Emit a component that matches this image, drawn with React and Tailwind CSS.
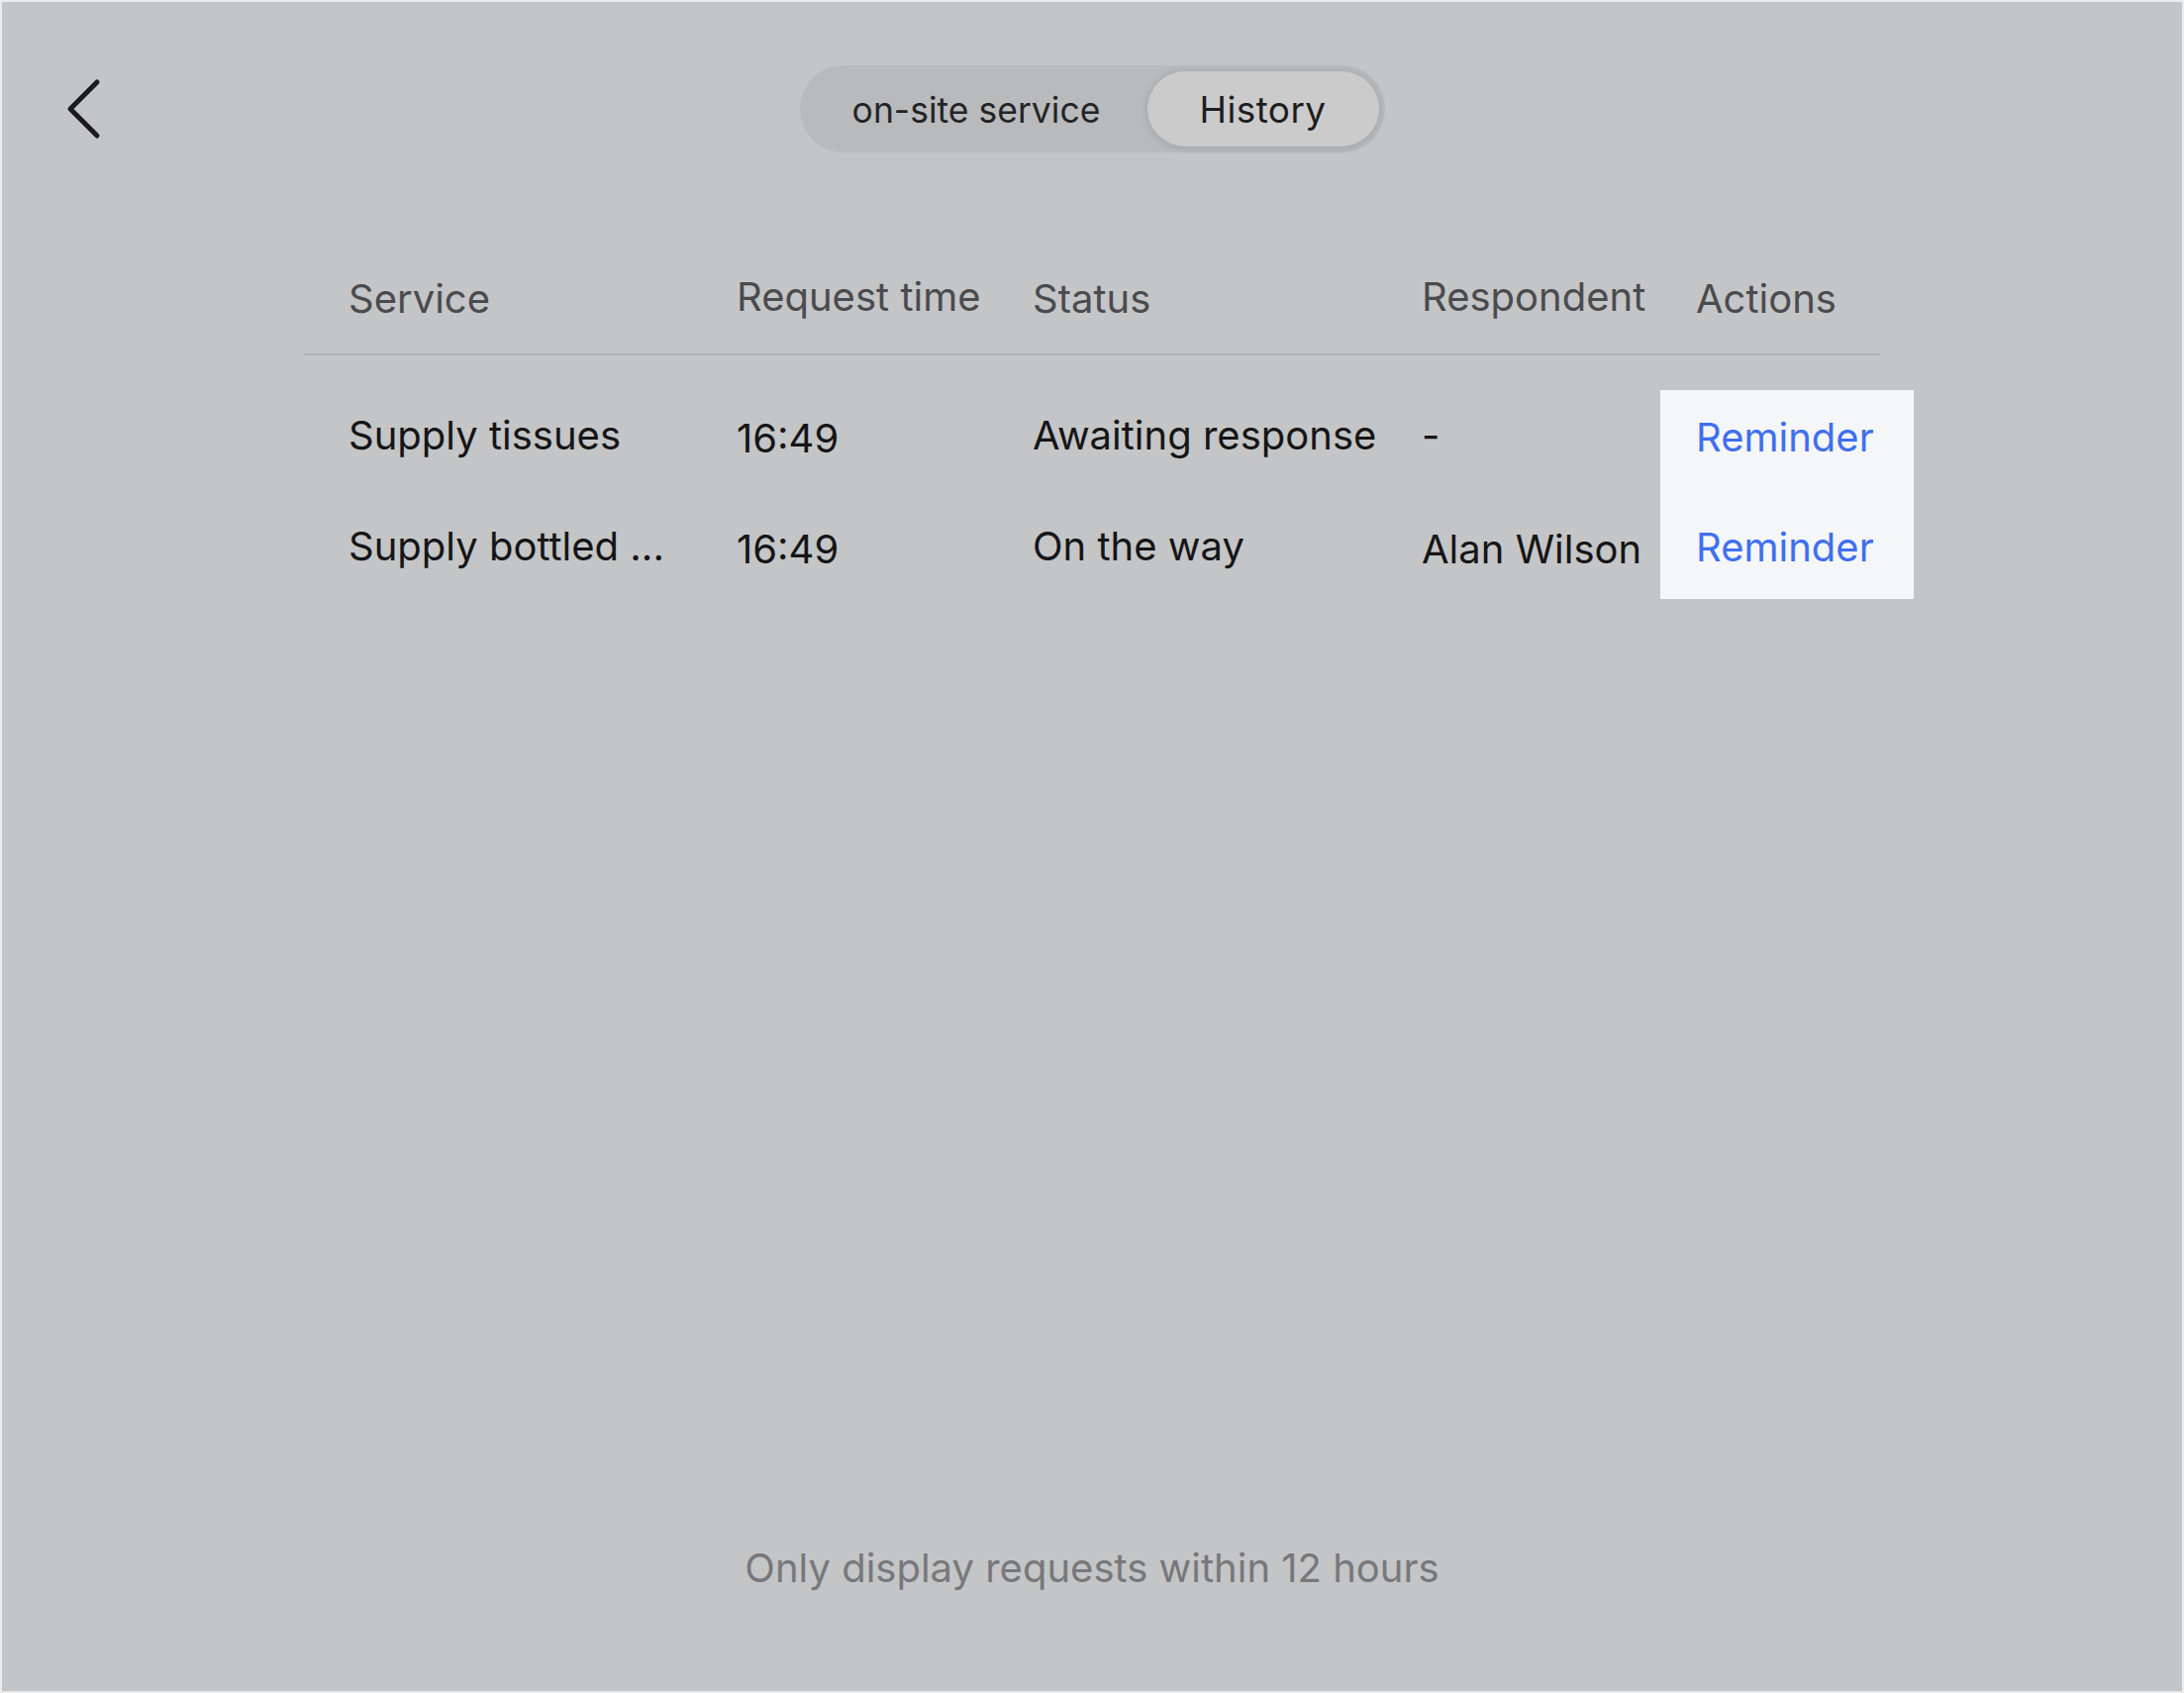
import React from "react";

const font = { fontFamily: 'Inter, "Noto Sans", sans-serif' };

export default function App() {
  return (
    <div
      className="w-[2206px] h-[1710px] bg-[#c4c5c6] border-2 border-[#ececec] flex flex-col"
      style={font}
    >
      {/* Top bar */}
      <div className="grid grid-cols-[1fr_auto_1fr] items-center pt-[64px]">
        <div className="pl-[65px]">
          <svg width="36" height="62" viewBox="0 0 36 62" fill="none">
            <path
              d="M31 4 L4 31 L31 58"
              stroke="#1b1b1d"
              strokeWidth="5"
              strokeLinecap="round"
              strokeLinejoin="round"
            />
          </svg>
        </div>
        <div className="flex items-center h-[88px] p-[6px] rounded-full bg-[#b9babc]">
          <div className="w-[345px] h-full flex items-center justify-center pt-[3px] text-[35.5px] text-[#242427]">
            on-site service
          </div>
          <div className="w-[234px] h-full flex items-center justify-center pt-[2px] rounded-full bg-[#cbcbcc] shadow-[0_1px_8px_rgba(0,0,0,0.14)] text-[37px] text-[#1d1d1f] tracking-[0.4px]">
            History
          </div>
        </div>
        <div />
      </div>

      {/* Table */}
      <div className="w-[1592px] mx-auto mt-[93px]">
        <div className="grid grid-cols-[392px_299px_393px_277px_1fr] items-center h-[112px] pl-[45px] border-b-2 border-[#b3b4b6] text-[40px] text-[#4a4b4f]">
          <div>Service</div>
          <div className="pb-[5px]">Request time</div>
          <div>Status</div>
          <div className="pb-[5px]">Respondent</div>
          <div>Actions</div>
        </div>

        <div className="flex mt-[35px] pl-[45px] text-[40px] text-[#151517]">
          <div className="grid grid-cols-[392px_299px_393px_241px] auto-rows-[112px]">
            <div className="pt-[22px] leading-[48px]">Supply tissues</div>
            <div className="pt-[25px] leading-[48px]">16:49</div>
            <div className="pt-[22px] leading-[48px]">Awaiting response</div>
            <div className="pt-[22px] leading-[48px]">-</div>

            <div className="pt-[22px] leading-[48px]">Supply bottled ...</div>
            <div className="pt-[25px] leading-[48px]">16:49</div>
            <div className="pt-[22px] leading-[48px]">On the way</div>
            <div className="pt-[25px] leading-[48px]">Alan Wilson</div>
          </div>
          <div className="shrink-0 w-[256px] h-[211px] bg-[#f5f6f8] pl-[36px] pt-[24px] flex flex-col gap-[63px] text-[#3f6ff0]">
            <div className="leading-[48px]">Reminder</div>
            <div className="leading-[48px]">Reminder</div>
          </div>
        </div>
      </div>

      {/* Footer */}
      <div className="mt-auto pb-[100px] text-center text-[40px] leading-[48px] text-[#77787c]">
        Only display requests within 12 hours
      </div>
    </div>
  );
}
